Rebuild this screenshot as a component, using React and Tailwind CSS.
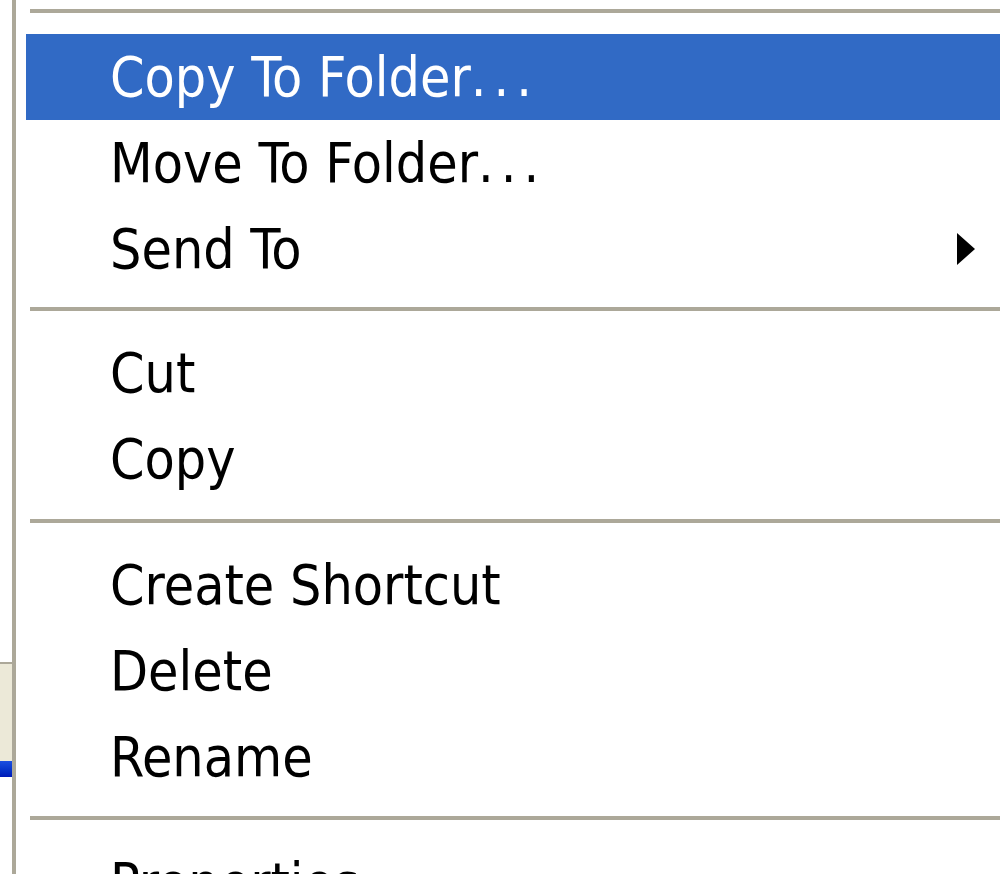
const font = { fontFamily: '"DejaVu Sans Condensed", "DejaVu Sans", "Liberation Sans", sans-serif' };

const Label = ({ text }) => {
  // Tahoma spaces its dots wider than DejaVu does
  if (text.endsWith("...")) {
    return (
      <>
        {text.slice(0, -3)}
        <span className="tracking-[7px]">...</span>
      </>
    );
  }
  return text;
};

const MenuItem = ({ label, active, submenu }) => (
  <div
    className={`h-[86px] shrink-0 flex items-center pl-[84px] pr-[24px] ${
      active ? "bg-[#316ac5] text-white" : "text-black"
    }`}
  >
    <span className="flex-1 text-[55px] leading-none whitespace-nowrap">
      <Label text={label} />
    </span>
    {submenu && (
      <svg width="18" height="32" viewBox="0 0 18 32" className="mr-[1px]">
        <polygon points="0,0 18,16 0,32" fill={active ? "#fff" : "#000"} />
      </svg>
    )}
  </div>
);

const Separator = ({ top = 15, bottom = 20 }) => (
  <div className="shrink-0 pl-[4px]" style={{ paddingTop: top, paddingBottom: bottom }}>
    <div className="h-[4px] bg-[#aca899]" />
  </div>
);

export default function App() {
  return (
    <div className="w-[1000px] h-[874px] overflow-hidden bg-white flex" style={font}>
      {/* window behind the menu */}
      <div className="w-[12px] shrink-0 flex flex-col bg-white">
        <div className="h-[662px] shrink-0" />
        <div className="h-[2px] shrink-0 bg-[#aca899]" />
        <div className="h-[97px] shrink-0 bg-[#ece9d8]" />
        <div className="h-[16px] shrink-0 bg-gradient-to-b from-[#1c4fe0] to-[#0018b8]" />
      </div>
      <div className="w-[4px] shrink-0 bg-[#aca899]" />

      <div className="flex-1 pl-[10px] flex flex-col">
        <Separator top={9} bottom={21} />
        <MenuItem label="Copy To Folder..." active />
        <MenuItem label="Move To Folder..." />
        <MenuItem label="Send To" submenu />
        <Separator top={15} bottom={19} />
        <MenuItem label="Cut" />
        <MenuItem label="Copy" />
        <Separator top={17} bottom={19} />
        <MenuItem label="Create Shortcut" />
        <MenuItem label="Delete" />
        <MenuItem label="Rename" />
        <Separator top={16} bottom={20} />
        <MenuItem label="Properties" />
      </div>
    </div>
  );
}
